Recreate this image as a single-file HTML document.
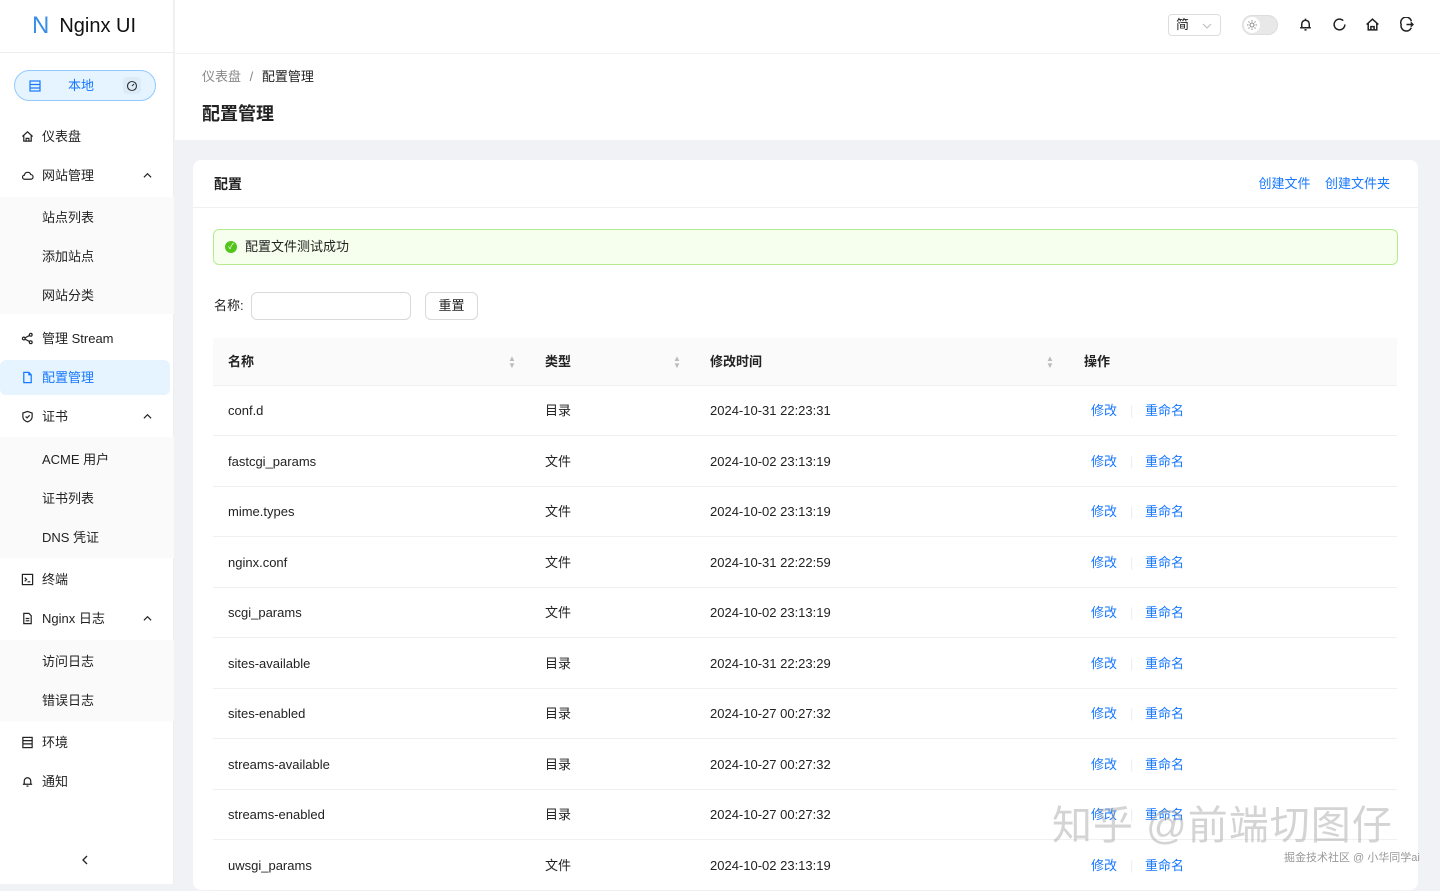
<!DOCTYPE html>
<html><head><meta charset="utf-8"><style>
*{box-sizing:border-box;margin:0;padding:0}
body{width:1440px;height:884px;overflow:hidden;font-family:"Liberation Sans","Noto Sans CJK SC",sans-serif;font-size:13px;line-height:16px;color:#222;background:#f0f2f5;position:relative}
.side{position:absolute;left:0;top:0;width:174px;height:884px;background:#fff;border-right:1px solid #eee}
.logo{height:53px;border-bottom:1px solid #eee;display:flex;align-items:center;padding-left:32px;font-size:20px;color:#111}
.logo b{color:#3a8ee6;font-weight:400;font-size:24px;margin-right:10px}
.env{position:absolute;left:14px;top:70px;width:142px;height:31px;border:1px solid #91caff;background:#e6f4ff;border-radius:16px;color:#1677ff;font-size:13px}
.mi{position:absolute;left:0;width:170px;height:35px;display:flex;align-items:center;padding-left:42px;font-size:13px}
.mi svg{position:absolute;left:21px;top:11px;width:13px;height:13px;fill:none;stroke:#222;stroke-width:1.3}
.sel svg{stroke:#1677ff}
.sub{position:absolute;left:0;width:174px;background:#fafafa}
.sel{background:#e6f4ff;color:#1677ff;border-radius:6px}
.hdr{position:absolute;left:175px;top:0;right:0;height:53px;background:#fff}
.hdr svg.i{position:absolute;top:17px;width:15px;height:15px;fill:none;stroke:#222;stroke-width:1.4}
.ph{position:absolute;left:175px;top:54px;right:0;height:86px;background:#fff}
.card{position:absolute;left:193px;top:160px;width:1225px;height:730px;background:#fff;border-radius:8px}
.a{color:#1677ff}
.row{position:absolute;left:20px;width:1184px;height:50px;border-bottom:1px solid #f0f0f0}
.row span{position:absolute;top:17px;line-height:16px}
.srt{color:#bbb;font-size:8px;line-height:7px!important;top:17px!important}
</style></head><body>
<div class="side">
<div class="logo"><b>N</b>Nginx UI</div>
<div class="env"><svg style="position:absolute;left:14px;top:9px" width="12" height="12" viewBox="0 0 12 12" fill="none" stroke="#1677ff" stroke-width="1.2"><rect x="1" y="1" width="10" height="10"/><path d="M1 4.5h10M1 8h10"/></svg><span style="position:absolute;left:53px;top:7px">本地</span><span style="position:absolute;right:14px;top:6px;width:18px;height:17px;background:#dcebf8;border-radius:4px"><svg style="position:absolute;left:3px;top:3px" width="12" height="12" viewBox="0 0 12 12" fill="none" stroke="#333" stroke-width="1.1"><circle cx="6" cy="6" r="4.5"/><path d="M6 6l2-2"/></svg></span></div>
<div class="mi" style="top:119px"><svg viewBox="0 0 14 14"><path d="M1.5 7L7 2l5.5 5M3 6v6h8V6M5.5 12V9h3v3"/></svg>仪表盘</div>
<div class="mi" style="top:158px"><svg viewBox="0 0 14 14"><path d="M4 11h6.5a2.5 2.5 0 000-5 3.5 3.5 0 00-6.8.6A2.2 2.2 0 004 11z"/></svg>网站管理<svg viewBox="0 0 10 10" style="position:absolute;left:auto;right:18px;top:13px;width:9px;height:9px"><path d="M1 7l4-4 4 4"/></svg></div>
<div class="sub" style="top:197px;height:117px"></div>
<div class="mi" style="top:200px">站点列表</div>
<div class="mi" style="top:239px">添加站点</div>
<div class="mi" style="top:278px">网站分类</div>
<div class="mi" style="top:321px"><svg viewBox="0 0 14 14"><circle cx="10.5" cy="3" r="1.5"/><circle cx="3" cy="7" r="1.5"/><circle cx="10.5" cy="11" r="1.5"/><path d="M4.3 6.3l4.9-2.6M4.3 7.7l4.9 2.6"/></svg>管理 Stream</div>
<div class="mi sel" style="top:360px"><svg viewBox="0 0 14 14"><path d="M3 1.5h5.5L11 4v8.5H3zM8.5 1.5V4H11"/></svg>配置管理</div>
<div class="mi" style="top:399px"><svg viewBox="0 0 14 14"><path d="M7 1.5l5 1.8v4c0 3-2.3 4.6-5 5.5-2.7-.9-5-2.5-5-5.5v-4zM5 7l1.5 1.5L9.3 5.7"/></svg>证书<svg viewBox="0 0 10 10" style="position:absolute;left:auto;right:18px;top:13px;width:9px;height:9px"><path d="M1 7l4-4 4 4"/></svg></div>
<div class="sub" style="top:437px;height:121px"></div>
<div class="mi" style="top:442px">ACME 用户</div>
<div class="mi" style="top:481px">证书列表</div>
<div class="mi" style="top:520px">DNS 凭证</div>
<div class="mi" style="top:562px"><svg viewBox="0 0 14 14"><rect x="1.5" y="1.5" width="11" height="11"/><path d="M4 5l2 2-2 2M7 9.5h3"/></svg>终端</div>
<div class="mi" style="top:601px"><svg viewBox="0 0 14 14"><path d="M3 1.5h5.5L11 4v8.5H3zM5 7h4M5 9.5h4"/></svg>Nginx 日志<svg viewBox="0 0 10 10" style="position:absolute;left:auto;right:18px;top:13px;width:9px;height:9px"><path d="M1 7l4-4 4 4"/></svg></div>
<div class="sub" style="top:640px;height:81px"></div>
<div class="mi" style="top:644px">访问日志</div>
<div class="mi" style="top:683px">错误日志</div>
<div class="mi" style="top:725px"><svg viewBox="0 0 14 14"><rect x="2" y="1.5" width="10" height="11"/><path d="M2 5h10M2 8.5h10"/></svg>环境</div>
<div class="mi" style="top:764px"><svg viewBox="0 0 14 14"><path d="M3.5 10V6.5a3.5 3.5 0 017 0V10h1.5H2zM6 12h2"/></svg>通知</div>
<svg style="position:absolute;left:81px;top:855px" width="8" height="10" viewBox="0 0 8 10" fill="none" stroke="#222" stroke-width="1.3"><path d="M6 1L2 5l4 4"/></svg>
</div>
<div class="hdr">
<div style="position:absolute;left:993px;top:14px;width:53px;height:22px;border:1px solid #ddd;border-radius:4px;padding:2px 0 0 7px;font-size:13px">简<svg style="position:absolute;left:33px;top:8px" width="10" height="6" viewBox="0 0 10 6" fill="none" stroke="#bbb" stroke-width="1"><path d="M1 1l4 4 4-4"/></svg></div>
<div style="position:absolute;left:1067px;top:15px;width:36px;height:20px;background:#e8e8e8;border-radius:10px;border:1px solid #ddd"><div style="position:absolute;left:1px;top:1px;width:16px;height:16px;border-radius:8px;background:#fff"><svg style="position:absolute;left:3px;top:3px" width="10" height="10" fill="none" stroke="#888" stroke-width="1" viewBox="0 0 10 10"><circle cx="5" cy="5" r="2"/><path d="M5 0v1.5M5 8.5V10M0 5h1.5M8.5 5H10M1.5 1.5l1 1M7.5 7.5l1 1M1.5 8.5l1-1M7.5 2.5l1-1"/></svg></div></div>
<svg class="i" style="left:1123px" viewBox="0 0 14 14"><path d="M3.5 10V6.5a3.5 3.5 0 017 0V10h1.5H2zM6 12h2M7 1.5v1.5"/></svg>
<svg class="i" style="left:1157px" viewBox="0 0 14 14"><path d="M12 7a5 5 0 11-1.5-3.6"/></svg>
<svg class="i" style="left:1190px" viewBox="0 0 14 14"><path d="M1.5 7L7 2l5.5 5M3 6v6h8V6M5.5 12V9h3v3"/></svg>
<svg class="i" style="left:1224px" viewBox="0 0 14 14"><path d="M11.5 4A5 5 0 102 7a5 5 0 009.5 3M7 7h6M11 5l2 2-2 2"/></svg>
</div>
<div class="ph">
<div style="position:absolute;left:27px;top:15px;color:#888">仪表盘 <span style="margin:0 5px">/</span> <span style="color:#222">配置管理</span></div>
<div style="position:absolute;left:27px;top:49px;font-size:18px;line-height:22px;font-weight:bold">配置管理</div>
</div>
<div class="card">
<div style="position:absolute;left:0;top:0;right:0;height:48px;border-bottom:1px solid #f0f0f0"></div>
<div style="position:absolute;left:21px;top:16px;font-weight:bold;font-size:14px">配置</div>
<div class="a" style="position:absolute;right:28px;top:16px">创建文件 &nbsp;&nbsp; 创建文件夹</div>
<div style="position:absolute;left:20px;top:69px;width:1185px;height:36px;background:#f6ffed;border:1px solid #b7eb8f;border-radius:6px"><span style="position:absolute;left:11px;top:11px;width:12px;height:12px;border-radius:6px;background:#52c41a;color:#fff;font-size:8px;text-align:center;line-height:12px">✓</span><span style="position:absolute;left:31px;top:9px">配置文件测试成功</span></div>
<div style="position:absolute;left:21px;top:138px">名称:</div>
<div style="position:absolute;left:58px;top:132px;width:160px;height:28px;border:1px solid #d9d9d9;border-radius:6px"></div>
<div style="position:absolute;left:232px;top:132px;width:53px;height:28px;border:1px solid #d9d9d9;border-radius:6px;text-align:center;line-height:26px">重置</div>
<div class="row" style="top:178px;height:48px;background:#fafafa;font-weight:bold"><span style="left:15px;top:16px">名称</span><span class="srt" style="left:295px">▲<br>▼</span><span style="left:332px;top:16px">类型</span><span class="srt" style="left:460px">▲<br>▼</span><span style="left:497px;top:16px">修改时间</span><span class="srt" style="left:833px">▲<br>▼</span><span style="left:871px;top:16px">操作</span></div>
<div class="row" style="top:226px"><span style="left:15px">conf.d</span><span style="left:332px">目录</span><span style="left:497px">2024-10-31 22:23:31</span><span class="a" style="left:878px">修改</span><span style="left:917px;color:#eee">|</span><span class="a" style="left:932px">重命名</span></div>
<div class="row" style="top:276.5px"><span style="left:15px">fastcgi_params</span><span style="left:332px">文件</span><span style="left:497px">2024-10-02 23:13:19</span><span class="a" style="left:878px">修改</span><span style="left:917px;color:#eee">|</span><span class="a" style="left:932px">重命名</span></div>
<div class="row" style="top:327px"><span style="left:15px">mime.types</span><span style="left:332px">文件</span><span style="left:497px">2024-10-02 23:13:19</span><span class="a" style="left:878px">修改</span><span style="left:917px;color:#eee">|</span><span class="a" style="left:932px">重命名</span></div>
<div class="row" style="top:377.5px"><span style="left:15px">nginx.conf</span><span style="left:332px">文件</span><span style="left:497px">2024-10-31 22:22:59</span><span class="a" style="left:878px">修改</span><span style="left:917px;color:#eee">|</span><span class="a" style="left:932px">重命名</span></div>
<div class="row" style="top:428px"><span style="left:15px">scgi_params</span><span style="left:332px">文件</span><span style="left:497px">2024-10-02 23:13:19</span><span class="a" style="left:878px">修改</span><span style="left:917px;color:#eee">|</span><span class="a" style="left:932px">重命名</span></div>
<div class="row" style="top:478.5px"><span style="left:15px">sites-available</span><span style="left:332px">目录</span><span style="left:497px">2024-10-31 22:23:29</span><span class="a" style="left:878px">修改</span><span style="left:917px;color:#eee">|</span><span class="a" style="left:932px">重命名</span></div>
<div class="row" style="top:529px"><span style="left:15px">sites-enabled</span><span style="left:332px">目录</span><span style="left:497px">2024-10-27 00:27:32</span><span class="a" style="left:878px">修改</span><span style="left:917px;color:#eee">|</span><span class="a" style="left:932px">重命名</span></div>
<div class="row" style="top:579.5px"><span style="left:15px">streams-available</span><span style="left:332px">目录</span><span style="left:497px">2024-10-27 00:27:32</span><span class="a" style="left:878px">修改</span><span style="left:917px;color:#eee">|</span><span class="a" style="left:932px">重命名</span></div>
<div class="row" style="top:630px"><span style="left:15px">streams-enabled</span><span style="left:332px">目录</span><span style="left:497px">2024-10-27 00:27:32</span><span class="a" style="left:878px">修改</span><span style="left:917px;color:#eee">|</span><span class="a" style="left:932px">重命名</span></div>
<div class="row" style="top:680.5px"><span style="left:15px">uwsgi_params</span><span style="left:332px">文件</span><span style="left:497px">2024-10-02 23:13:19</span><span class="a" style="left:878px">修改</span><span style="left:917px;color:#eee">|</span><span class="a" style="left:932px">重命名</span></div>
</div>
<div style="position:absolute;left:1052px;top:802px;font-size:40px;line-height:48px;color:rgba(160,160,160,0.45);letter-spacing:1px">知乎 @前端切图仔</div>
<div style="position:absolute;left:1284px;top:850px;font-size:11px;color:#999">掘金技术社区 @ 小华同学ai</div>
</body></html>
